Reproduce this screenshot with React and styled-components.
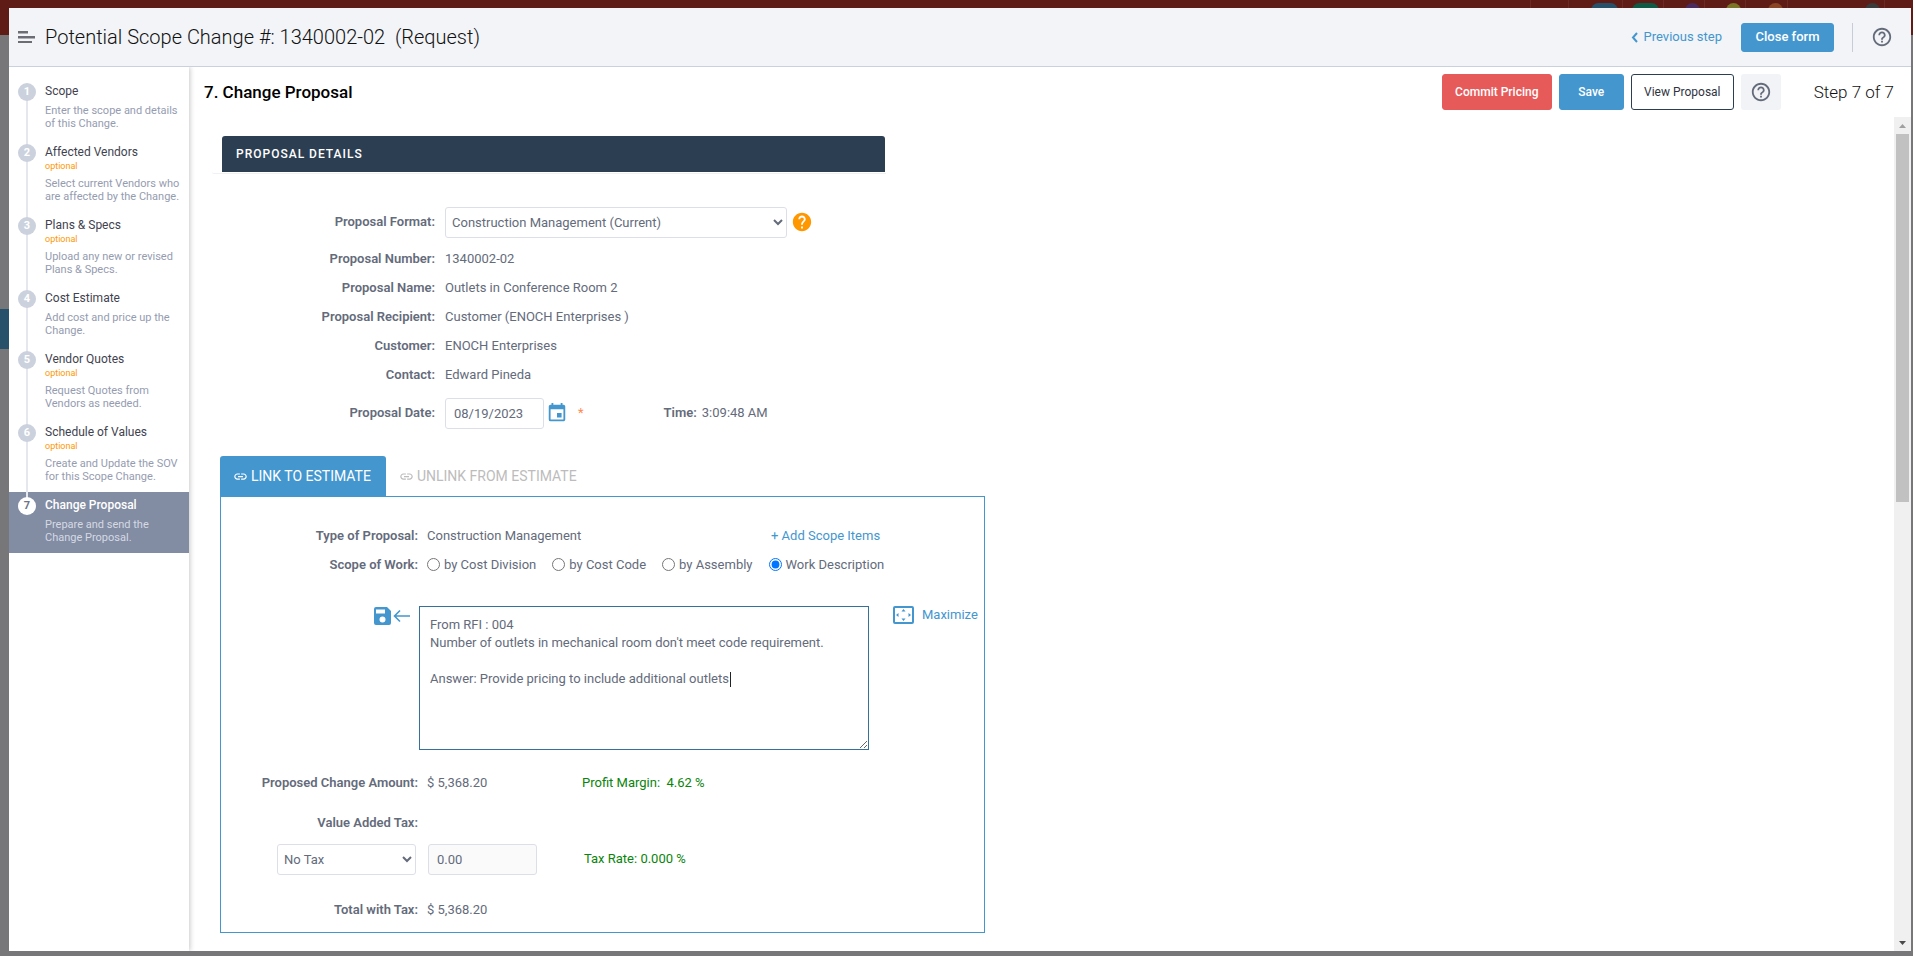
import React from "react";
import styled, { createGlobalStyle, css } from "styled-components";
import { MdEvent, MdHelp, MdHelpOutline, MdLink } from "react-icons/md";

const c = {
  blue: "#4496cf",
  red: "#e75a5a",
  navy: "#2c3e52",
  text: "#646b7b",
  line: "#dddfe8",
  muted: "#959cb0",
  orange: "#ff9800",
};

const GlobalStyle = createGlobalStyle`
  *, *::before, *::after { box-sizing: border-box; }
  body {
    margin: 0;
    font-family: Roboto, "Liberation Sans", sans-serif;
    font-size: 13px;
    line-height: 18px;
    color: ${c.text};
  }
  button, input, select, textarea { font: inherit; color: inherit; margin: 0; }
  a { color: ${c.blue}; text-decoration: none; }
  svg { display: block; flex: none; }
`;

const Page = styled.div`
  display: grid;
  grid-template: minmax(0, 1fr) / minmax(0, 1fr);
  height: 100vh;
  > * { grid-area: 1 / 1; }
`;

/* Dimmed application behind the dialog */
const Backdrop = styled.div`
  background: #777779;
  overflow: hidden;
`;
const AppBar = styled.div`
  display: flex;
  justify-content: flex-end;
  height: 35px;
  background: #5f1c16;
`;
const AppCell = styled.div`
  position: relative;
  width: ${(p) => p.$w}px;
  border-left: 1px solid #6c2a24;
`;
const AppBadge = styled.span`
  position: absolute;
  top: 3px;
  right: 4px;
  width: ${(p) => (p.$wide ? 27 : 15)}px;
  height: 15px;
  border-radius: 8px;
  background: ${(p) => p.$color};
`;
const SideTab = styled.div`
  width: 24px;
  height: 40px;
  margin-top: 274px;
  background: #27506b;
`;

const Dialog = styled.div`
  z-index: 1;
  display: flex;
  flex-direction: column;
  min-height: 0;
  margin: 8px 2px 5px 9px;
  background: #fff;
`;
const Header = styled.header`
  display: flex;
  align-items: center;
  flex: none;
  height: 59px;
  padding: 0 18px 0 9px;
  background: #f2f4f7;
  border-bottom: 1px solid #c9d1dd;
`;
const Title = styled.h1`
  flex: 1;
  margin: 0 0 0 10px;
  font-size: 20px;
  line-height: 24px;
  font-weight: 300;
  color: #111;
  white-space: pre;
`;
const HeaderActions = styled.div`
  display: flex;
  align-items: center;
  color: #646b7b;
`;
const PrevLink = styled.a`
  display: flex;
  align-items: center;
  gap: 6px;
  margin-right: 19px;
`;
const Divider = styled.span`
  width: 1px;
  height: 29px;
  margin: 0 18px;
  background: #c9ccd6;
`;
const Button = styled.button`
  height: ${(p) => (p.$small ? 29 : 36)}px;
  width: ${(p) => p.$w}px;
  padding: 0;
  border: 1px solid ${(p) => p.$border || p.$bg || c.blue};
  border-radius: 3px;
  background: ${(p) => p.$bg || c.blue};
  color: ${(p) => p.$color || "#fff"};
  font-size: ${(p) => (p.$small ? 13 : 12)}px;
  font-weight: ${(p) => (p.$color ? 400 : 500)};
`;
const IconButton = styled.button`
  display: flex;
  align-items: center;
  justify-content: center;
  padding: 0;
  border: 0;
  border-radius: 3px;
  background: none;
  color: inherit;
  ${(p) => p.$filled && css`width: 40px; height: 36px; background: #f2f3f6;`}
`;

const Body = styled.div`
  display: flex;
  flex: 1;
  min-height: 0;
`;
const Sidebar = styled.nav`
  z-index: 1;
  flex: none;
  width: 180px;
  padding-top: 11px;
  box-shadow: 1px 0 5px rgba(0, 0, 0, 0.22);
  clip-path: inset(0 -10px 0 0);
  background: #fff;
`;
const Steps = styled.ol`
  margin: 0;
  padding: 0;
  list-style: none;
`;
const Step = styled.li`
  position: relative;
  display: flex;
  align-items: flex-start;
  gap: 9px;
  padding: 5px 0 9px 9px;
  background: ${(p) => (p.$active ? "#828ca3" : "none")};
  &::before {
    content: "";
    position: absolute;
    left: 17px;
    top: 0;
    height: ${(p) => (p.$active ? "8px" : "100%")};
    width: 2px;
    background: #e4e7ee;
  }
  &:first-child::before { top: 12px; }
`;
const StepDot = styled.span`
  position: relative;
  width: 18px;
  height: 18px;
  border-radius: 50%;
  background: ${(p) => (p.$active ? "#fff" : "#cbd2dd")};
  color: ${(p) => (p.$active ? "#6d7488" : "#fff")};
  font-size: 11px;
  font-weight: 700;
  text-align: center;
`;
const StepText = styled.a`
  display: block;
  color: ${(p) => (p.$active ? "#d5dae3" : c.muted)};
`;
const StepName = styled.span`
  display: block;
  font-size: 12px;
  line-height: 16px;
  font-weight: ${(p) => (p.$active ? 500 : 400)};
  color: ${(p) => (p.$active ? "#fff" : "#3f4350")};
`;
const StepOptional = styled.span`
  display: block;
  font-size: 9px;
  line-height: 12px;
  color: ${c.orange};
`;
const StepNote = styled.span`
  display: block;
  margin-top: 5px;
  font-size: 11px;
  line-height: 13px;
  white-space: pre;
`;

const Main = styled.main`
  display: flex;
  flex-direction: column;
  flex: 1;
  min-width: 0;
`;
const Toolbar = styled.div`
  display: flex;
  align-items: center;
  flex: none;
  gap: 7px;
  height: 50px;
  padding: 0 17px 0 15px;
`;
const StepTitle = styled.h2`
  flex: 1;
  margin: 0;
  font-size: 17px;
  font-weight: 500;
  color: #000;
`;
const StepCount = styled.span`
  margin-left: 26px;
  font-size: 17px;
  font-weight: 300;
  color: #111;
`;
const ScrollArea = styled.div`
  display: flex;
  flex: 1;
  min-height: 0;
`;
const Content = styled.div`
  flex: 1;
  min-width: 0;
  padding: 19px 31px 20px;
  overflow-y: auto;
  scrollbar-width: none;
`;
const Scrollbar = styled.div`
  display: flex;
  flex-direction: column;
  align-items: center;
  width: 17px;
  background: #f0f0f0;
`;
const ScrollArrow = styled.span`
  display: flex;
  align-items: center;
  justify-content: center;
  height: 17px;
`;
const ScrollTrack = styled.div`
  flex: 1;
  width: 13px;
`;
const ScrollThumb = styled.div`
  height: 46%;
  background: #c1c1c1;
`;

const PanelTitle = styled.h3`
  max-width: 663px;
  margin: 0 0 0 2px;
  padding: 0 14px;
  border-radius: 3px 3px 0 0;
  background: ${c.navy};
  color: #fff;
  font-size: 12px;
  line-height: 36px;
  font-weight: 500;
  letter-spacing: 1px;
`;
const PanelRule = styled.div`
  max-width: 674px;
  height: 2px;
  margin-left: -8px;
  border-bottom: 1px solid #f1f1f4;
  border-radius: 0 0 0 4px;
`;
const Form = styled.div`
  display: flex;
  flex-direction: column;
  padding-top: 26px;
`;
const Row = styled.div`
  display: flex;
  align-items: center;
  height: ${(p) => p.$h || 29}px;
`;
const labelStyle = css`
  flex: none;
  width: ${(p) => p.$w || 215}px;
  margin-right: ${(p) => (p.$w ? 9 : 10)}px;
  font-weight: 600;
  text-align: right;
`;
const Label = styled.label`${labelStyle}`;
const LabelText = styled.span`${labelStyle}`;
const Value = styled.span`
  width: ${(p) => (p.$w ? p.$w + "px" : "auto")};
  white-space: nowrap;
`;
const Green = styled.span`
  color: #0a840a;
  white-space: pre;
`;
const fieldStyle = css`
  width: ${(p) => p.$w}px;
  height: 31px;
  border: 1px solid ${c.line};
  border-radius: 3px;
  background: #fff;
  outline: none;
`;
const Select = styled.select`
  ${fieldStyle}
  padding: 0 2px;
`;
const Input = styled.input`
  ${fieldStyle}
  padding: 0 8px;
  &:disabled { background: #fafafb; color: ${c.text}; }
`;
const HintButton = styled(IconButton)`
  margin-left: ${(p) => (p.$color ? 4 : 2)}px;
  color: ${(p) => p.$color || c.blue};
`;
const Required = styled.span`
  margin: 0 80px 0 10px;
  color: #ff8a50;
`;
const Time = styled.span`
  display: flex;
  gap: 5px;
  b { font-weight: 600; }
`;

const Tabs = styled.div`
  display: flex;
  height: 40px;
  margin-top: 19px;
`;
const Tab = styled.button`
  display: flex;
  align-items: center;
  gap: 3px;
  padding: 0 15px 0 13px;
  border: 0;
  border-radius: 3px 3px 0 0;
  background: ${(p) => (p.$active ? c.blue : "none")};
  color: ${(p) => (p.$active ? "#fff" : "#bcbcbc")};
  font-size: 14px;
`;
const Estimate = styled.section`
  display: flex;
  flex-direction: column;
  max-width: 765px;
  padding: 24px 0 8px;
  border: 1px solid ${c.blue};
`;
const AddLink = styled.a`
  margin-left: 194px;
`;
const RadioGroup = styled.div`
  display: flex;
  gap: 16px;
`;
const Radio = styled.label`
  display: flex;
  align-items: center;
  gap: 4px;
  white-space: nowrap;
  input { width: 13px; height: 13px; }
`;
const Editor = styled.div`
  display: flex;
  align-items: flex-start;
  margin: 27px 0 18px;
`;
const EditorTools = styled.div`
  display: flex;
  justify-content: flex-end;
  width: 198px;
  padding-right: 8px;
`;
const TextWrap = styled.div`
  position: relative;
  width: 450px;
  height: 144px;
`;
const TextArea = styled.textarea`
  display: block;
  width: 100%;
  height: 100%;
  padding: 9px 10px;
  border: 1px solid #36719b;
  border-radius: 0;
  outline: none;
  background: #fff;
`;
const Caret = styled.span`
  position: absolute;
  left: 311px;
  top: 66px;
  width: 1px;
  height: 15px;
  background: #222;
`;
const MaximizeLink = styled.a`
  display: flex;
  align-items: center;
  gap: 8px;
  margin-left: 24px;
`;
const TaxRow = styled(Row)`
  margin-bottom: 26px;
  padding-left: 56px;
  select { margin-right: 12px; }
  span { margin-left: 47px; }
`;

const MenuIcon = () => (
  <svg width="17" height="12" fill="#6c6c74">
    <path d="M0 0h10v2.500H0zM0 5h17v2.500H0zM0 10h14v2.500H0z" />
  </svg>
);
const SaveBackIcon = () => (
  <svg width="37" height="20" viewBox="0 0 37 20" fill={c.blue}>
    <path fillRule="evenodd" d="M2 1h11l4 4v12a2 2 0 0 1-2 2H2a2 2 0 0 1-2-2V3a2 2 0 0 1 2-2zm0 2.500v4h9v-4zm6.500 7a3 3 0 1 0 0 6 3 3 0 0 0 0-6z" />
    <path d="M26 4.500L20.500 10l5.500 5.500M20.500 10H36" fill="none" stroke={c.blue} strokeWidth="1.600" />
  </svg>
);
const MaximizeIcon = () => (
  <svg width="21" height="18" fill={c.blue}>
    <rect x="1" y="1" width="19" height="16" rx="1" fill="none" stroke={c.blue} strokeWidth="2" />
    <path d="M10.500 3l2 2.500h-4zM10.500 15l2-2.500h-4zM3 9l2.500-2v4zM18 9l-2.500-2v4z" />
  </svg>
);
const ChevronIcon = () => (
  <svg width="7" height="12" fill="none" stroke={c.blue} strokeWidth="2">
    <path d="M6 2L2 6.500l4 4.500" />
  </svg>
);
const Triangle = ({ down }) => (
  <svg width="7" height="4" fill={down ? "#4a4a4a" : "#a0a0a0"}>
    <path d={down ? "M0 0h7L3.500 4z" : "M0 4h7L3.500 0z"} />
  </svg>
);

const steps = [
  { name: "Scope", note: "Enter the scope and details\nof this Change." },
  { name: "Affected Vendors", optional: true, note: "Select current Vendors who\nare affected by the Change." },
  { name: "Plans & Specs", optional: true, note: "Upload any new or revised\nPlans & Specs." },
  { name: "Cost Estimate", note: "Add cost and price up the\nChange." },
  { name: "Vendor Quotes", optional: true, note: "Request Quotes from\nVendors as needed." },
  { name: "Schedule of Values", optional: true, note: "Create and Update the SOV\nfor this Scope Change." },
  { name: "Change Proposal", active: true, note: "Prepare and send the\nChange Proposal." },
];
const details = [
  ["Proposal Number:", "1340002-02"],
  ["Proposal Name:", "Outlets in Conference Room 2"],
  ["Proposal Recipient:", "Customer (ENOCH Enterprises )"],
  ["Customer:", "ENOCH Enterprises"],
  ["Contact:", "Edward Pineda"],
];
const scopes = ["by Cost Division", "by Cost Code", "by Assembly", "Work Description"];
const appCells = [
  { w: 38 },
  { w: 54, color: "#27506b", wide: true },
  { w: 41, color: "#0e5a45", wide: true },
  { w: 41, color: "#4b2a5e" },
  { w: 41, color: "#7c7426" },
  { w: 42, color: "#8a4526" },
  { w: 97, color: "#3b3b3b" },
  { w: 29 },
];
const description =
  "From RFI : 004\nNumber of outlets in mechanical room don't meet code requirement.\n\nAnswer: Provide pricing to include additional outlets";

export default function App() {
  return (
    <Page>
      <GlobalStyle />
      <Backdrop aria-hidden="true">
        <AppBar>
          {appCells.map((cell, i) => (
            <AppCell key={i} $w={cell.w}>
              {cell.color && <AppBadge $color={cell.color} $wide={cell.wide} />}
            </AppCell>
          ))}
        </AppBar>
        <SideTab />
      </Backdrop>
      <Dialog role="dialog" aria-labelledby="form-title">
        <Header>
          <IconButton aria-label="Toggle steps"><MenuIcon /></IconButton>
          <Title id="form-title">{"Potential Scope Change #: 1340002-02  (Request)"}</Title>
          <HeaderActions>
            <PrevLink href="#previous"><ChevronIcon />Previous step</PrevLink>
            <Button $small $w={93}>Close form</Button>
            <Divider />
            <IconButton aria-label="Help"><MdHelpOutline size={22} /></IconButton>
          </HeaderActions>
        </Header>
        <Body>
          <Sidebar aria-label="Steps">
            <Steps>
              {steps.map((s, i) => (
                <Step key={s.name} $active={s.active}>
                  <StepDot $active={s.active}>{i + 1}</StepDot>
                  <StepText href={`#step-${i + 1}`} $active={s.active}>
                    <StepName $active={s.active}>{s.name}</StepName>
                    {s.optional && <StepOptional>optional</StepOptional>}
                    <StepNote>{s.note}</StepNote>
                  </StepText>
                </Step>
              ))}
            </Steps>
          </Sidebar>
          <Main>
            <Toolbar>
              <StepTitle>7. Change Proposal</StepTitle>
              <Button $w={110} $bg={c.red}>Commit Pricing</Button>
              <Button $w={65}>Save</Button>
              <Button $w={103} $bg="#fff" $border={c.navy} $color="#30343f">View Proposal</Button>
              <IconButton $filled aria-label="Step help"><MdHelpOutline size={22} color={c.text} /></IconButton>
              <StepCount>Step 7 of 7</StepCount>
            </Toolbar>
            <ScrollArea>
              <Content>
                <PanelTitle>PROPOSAL DETAILS</PanelTitle>
                <PanelRule />
                <Form>
                  <Row $h={44}>
                    <Label htmlFor="format">Proposal Format:</Label>
                    <Select id="format" $w={342}><option>Construction Management (Current)</option></Select>
                    <HintButton $color={c.orange} aria-label="About formats"><MdHelp size={22} /></HintButton>
                  </Row>
                  {details.map(([label, value]) => (
                    <Row key={label}>
                      <LabelText>{label}</LabelText>
                      <Value>{value}</Value>
                    </Row>
                  ))}
                  <Row $h={48}>
                    <Label htmlFor="date">Proposal Date:</Label>
                    <Input id="date" $w={99} defaultValue="08/19/2023" />
                    <HintButton aria-label="Choose date"><MdEvent size={22} /></HintButton>
                    <Required>*</Required>
                    <Time><b>Time:</b>3:09:48 AM</Time>
                  </Row>
                </Form>
                <Tabs role="tablist">
                  <Tab role="tab" $active aria-selected="true"><MdLink size={15} />LINK TO ESTIMATE</Tab>
                  <Tab role="tab" aria-selected="false"><MdLink size={15} />UNLINK FROM ESTIMATE</Tab>
                </Tabs>
                <Estimate>
                  <Row>
                    <LabelText $w={197}>Type of Proposal:</LabelText>
                    <Value $w={150}>Construction Management</Value>
                    <AddLink href="#add">+ Add Scope Items</AddLink>
                  </Row>
                  <Row>
                    <LabelText $w={197} id="scope">Scope of Work:</LabelText>
                    <RadioGroup role="radiogroup" aria-labelledby="scope">
                      {scopes.map((s) => (
                        <Radio key={s}>
                          <input type="radio" name="scope" defaultChecked={s === "Work Description"} />
                          {s}
                        </Radio>
                      ))}
                    </RadioGroup>
                  </Row>
                  <Editor>
                    <EditorTools>
                      <IconButton aria-label="Save description"><SaveBackIcon /></IconButton>
                    </EditorTools>
                    <TextWrap>
                      <TextArea aria-label="Work description" defaultValue={description} />
                      <Caret />
                    </TextWrap>
                    <MaximizeLink href="#maximize"><MaximizeIcon />Maximize</MaximizeLink>
                  </Editor>
                  <Row>
                    <LabelText $w={197}>Proposed Change Amount:</LabelText>
                    <Value $w={155}>$ 5,368.20</Value>
                    <Green>{"Profit Margin:  4.62 %"}</Green>
                  </Row>
                  <Row $h={52}>
                    <Label htmlFor="tax" $w={197}>Value Added Tax:</Label>
                  </Row>
                  <TaxRow $h={20}>
                    <Select id="tax" $w={139}><option>No Tax</option></Select>
                    <Input $w={109} disabled aria-label="Tax amount" defaultValue="0.00" />
                    <Green>Tax Rate: 0.000 %</Green>
                  </TaxRow>
                  <Row>
                    <LabelText $w={197}>Total with Tax:</LabelText>
                    <Value>$ 5,368.20</Value>
                  </Row>
                </Estimate>
              </Content>
              <Scrollbar aria-hidden="true">
                <ScrollArrow><Triangle /></ScrollArrow>
                <ScrollTrack><ScrollThumb /></ScrollTrack>
                <ScrollArrow><Triangle down /></ScrollArrow>
              </Scrollbar>
            </ScrollArea>
          </Main>
        </Body>
      </Dialog>
    </Page>
  );
}
